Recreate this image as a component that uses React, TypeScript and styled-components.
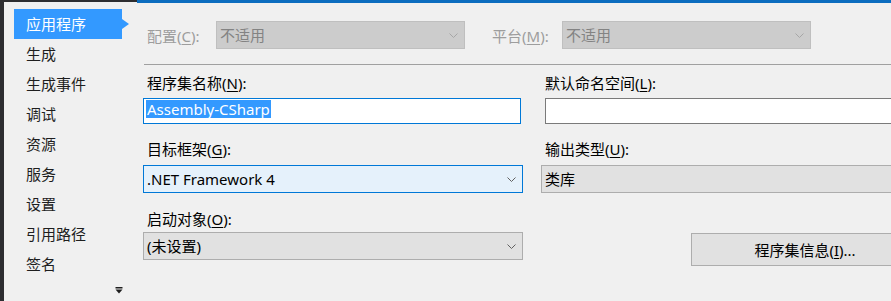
import React from "react";
import styled, { createGlobalStyle } from "styled-components";

const Global = createGlobalStyle`
  html, body { margin: 0; padding: 0; background: #f0f0f0; }
  #root { width: 891px; height: 301px; }
`;

const FONT = `"Noto Sans", "Noto Sans CJK SC", sans-serif`;

const Window = styled.div`
  display: flex;
  width: 891px;
  height: 301px;
  overflow: hidden;
  box-sizing: border-box;
  background: #f0f0f0;
  border-left: 4px solid #2d2d30;
  font-family: ${FONT};
  font-size: 15px;
  color: #000;
`;

const Sidebar = styled.nav`
  flex: 0 0 133px;
  box-sizing: border-box;
  border-top: 2px solid #2d2d30;
  padding-top: 7px;
  display: flex;
  flex-direction: column;
`;

const NavItem = styled.div<{ $active?: boolean }>`
  position: relative;
  margin-left: 10px;
  width: 108px;
  height: 30px;
  line-height: 30px;
  padding-left: 12px;
  box-sizing: border-box;
  white-space: nowrap;
  background: ${(p) => (p.$active ? "#3399ff" : "transparent")};
  color: ${(p) => (p.$active ? "#ffffff" : "#1e1e1e")};
  &::after {
    content: "";
    display: ${(p) => (p.$active ? "block" : "none")};
    position: absolute;
    right: -7px;
    top: 10px;
    border-left: 7px solid #3399ff;
    border-top: 5px solid transparent;
    border-bottom: 5px solid transparent;
  }
`;

const MoreIndicator = styled.svg`
  display: block;
  margin-top: 8px;
  margin-left: 111px;
`;

const Main = styled.main`
  flex: 1;
  min-width: 0;
  box-sizing: border-box;
  border-top: 3px solid #0c6dbf;
  padding-left: 6px;
  display: flex;
  flex-direction: column;
`;

const TopRow = styled.div`
  display: flex;
  align-items: center;
  padding-top: 18px;
`;

const DisabledLabel = styled.span<{ $width: number; $offset: number }>`
  flex: 0 0 ${(p) => p.$width}px;
  margin-left: ${(p) => p.$offset}px;
  padding-left: 4px;
  box-sizing: border-box;
  color: #9d9d9d;
  white-space: nowrap;
`;

const Key = styled.u`
  text-underline-offset: 2px;
`;

const Separator = styled.div`
  height: 1px;
  background: #a0a0a0;
  margin: 15px 0 0 1px;
`;

const FieldRow = styled.div<{ $top: number }>`
  display: grid;
  grid-template-columns: 380px 1fr;
  column-gap: 18px;
  margin-top: ${(p) => p.$top}px;
`;

const Field = styled.div`
  display: flex;
  flex-direction: column;
  min-width: 0;
`;

const Label = styled.div`
  height: 20px;
  line-height: 20px;
  padding-left: 4px;
  white-space: nowrap;
  color: #000;
`;

const TextBox = styled.div<{ $focused?: boolean; $gap: number; $inset?: number; $bleed?: boolean }>`
  margin-top: ${(p) => p.$gap}px;
  margin-left: ${(p) => p.$inset ?? 0}px;
  width: ${(p) => (p.$bleed ? "calc(100% + 20px)" : "378px")};
  height: 26px;
  box-sizing: border-box;
  background: #ffffff;
  border: 1px solid ${(p) => (p.$focused ? "#0078d7" : "#7a7a7a")};
  padding: 1px 0 0 2px;
  display: flex;
  align-items: flex-start;
`;

const Selection = styled.span`
  background: #3399ff;
  color: #ffffff;
  height: 18px;
  line-height: 18px;
  padding: 0 1px;
  white-space: nowrap;
`;

type Tone = "disabled" | "focused" | "normal";

const tones: Record<Tone, { bg: string; border: string; text: string; chevron: string }> = {
  disabled: { bg: "#cccccc", border: "#bfbfbf", text: "#838383", chevron: "#a6a6a6" },
  focused: { bg: "#e5f1fb", border: "#0078d7", text: "#000000", chevron: "#606060" },
  normal: { bg: "#e1e1e1", border: "#adadad", text: "#000000", chevron: "#606060" },
};

const SelectBox = styled.div<{ $tone: Tone; $width?: number; $gap?: number; $height: number }>`
  flex: 0 0 auto;
  margin-top: ${(p) => p.$gap ?? 0}px;
  width: ${(p) => (p.$width ? `${p.$width}px` : "calc(100% + 20px)")};
  height: ${(p) => p.$height}px;
  box-sizing: border-box;
  background: ${(p) => tones[p.$tone].bg};
  border: 1px solid ${(p) => tones[p.$tone].border};
  color: ${(p) => tones[p.$tone].text};
  display: flex;
  align-items: center;
  padding: 0 6px 0 3px;
  white-space: nowrap;
`;

const SelectText = styled.span`
  flex: 1;
  line-height: 20px;
`;

const Chevron = styled.svg`
  flex: 0 0 auto;
  display: block;
`;

const ButtonCell = styled.div`
  display: flex;
  min-width: 0;
`;

const Button = styled.div`
  margin-top: 24px;
  margin-left: 150px;
  flex: 0 0 228px;
  height: 33px;
  box-sizing: border-box;
  background: #e1e1e1;
  border: 1px solid #adadad;
  display: flex;
  align-items: center;
  justify-content: center;
  white-space: nowrap;
  color: #000;
`;

function Select({
  tone,
  value,
  width,
  gap,
  height = 28,
  chevronRight,
}: {
  tone: Tone;
  value: string;
  width?: number;
  gap?: number;
  height?: number;
  chevronRight?: boolean;
}) {
  return (
    <SelectBox $tone={tone} $width={width} $gap={gap} $height={height}>
      <SelectText>{value}</SelectText>
      {chevronRight !== false && (
        <Chevron width="9" height="5" viewBox="0 0 9 5">
          <polyline
            points="0.5,0.5 4.5,4.5 8.5,0.5"
            fill="none"
            stroke={tones[tone].chevron}
            strokeWidth="1"
          />
        </Chevron>
      )}
    </SelectBox>
  );
}

const navItems = ["应用程序", "生成", "生成事件", "调试", "资源", "服务", "设置", "引用路径", "签名"];

export default function App() {
  return (
    <>
      <Global />
      <Window>
        <Sidebar>
          {navItems.map((item, i) => (
            <NavItem key={item} $active={i === 0}>
              {item}
            </NavItem>
          ))}
          <MoreIndicator width="8" height="7" viewBox="0 0 8 7">
            <rect x="0.5" y="0" width="7" height="1.5" fill="#1e1e1e" />
            <polygon points="0.5,2.5 7.5,2.5 4,6.5" fill="#1e1e1e" />
          </MoreIndicator>
        </Sidebar>
        <Main>
          <TopRow>
            <DisabledLabel $width={73} $offset={0}>
              配置(<Key>C</Key>):
            </DisabledLabel>
            <Select tone="disabled" value="不适用" width={249} height={28} />
            <DisabledLabel $width={74} $offset={23}>
              平台(<Key>M</Key>):
            </DisabledLabel>
            <Select tone="disabled" value="不适用" width={249} height={28} />
          </TopRow>
          <Separator />
          <FieldRow $top={8}>
            <Field>
              <Label>
                程序集名称(<Key>N</Key>):
              </Label>
              <TextBox $focused $gap={5}>
                <Selection>Assembly-CSharp</Selection>
              </TextBox>
            </Field>
            <Field>
              <Label>
                默认命名空间(<Key>L</Key>):
              </Label>
              <TextBox $gap={5} $inset={4} $bleed />
            </Field>
          </FieldRow>
          <FieldRow $top={15}>
            <Field>
              <Label>
                目标框架(<Key>G</Key>):
              </Label>
              <Select tone="focused" value=".NET Framework 4" width={380} gap={6} />
            </Field>
            <Field>
              <Label>
                输出类型(<Key>U</Key>):
              </Label>
              <Select tone="normal" value="类库" gap={6} chevronRight={false} />
            </Field>
          </FieldRow>
          <FieldRow $top={16}>
            <Field>
              <Label>
                启动对象(<Key>O</Key>):
              </Label>
              <Select tone="normal" value="(未设置)" width={380} gap={3} />
            </Field>
            <ButtonCell>
              <Button>
                程序集信息(<Key>I</Key>)...
              </Button>
            </ButtonCell>
          </FieldRow>
        </Main>
      </Window>
    </>
  );
}
